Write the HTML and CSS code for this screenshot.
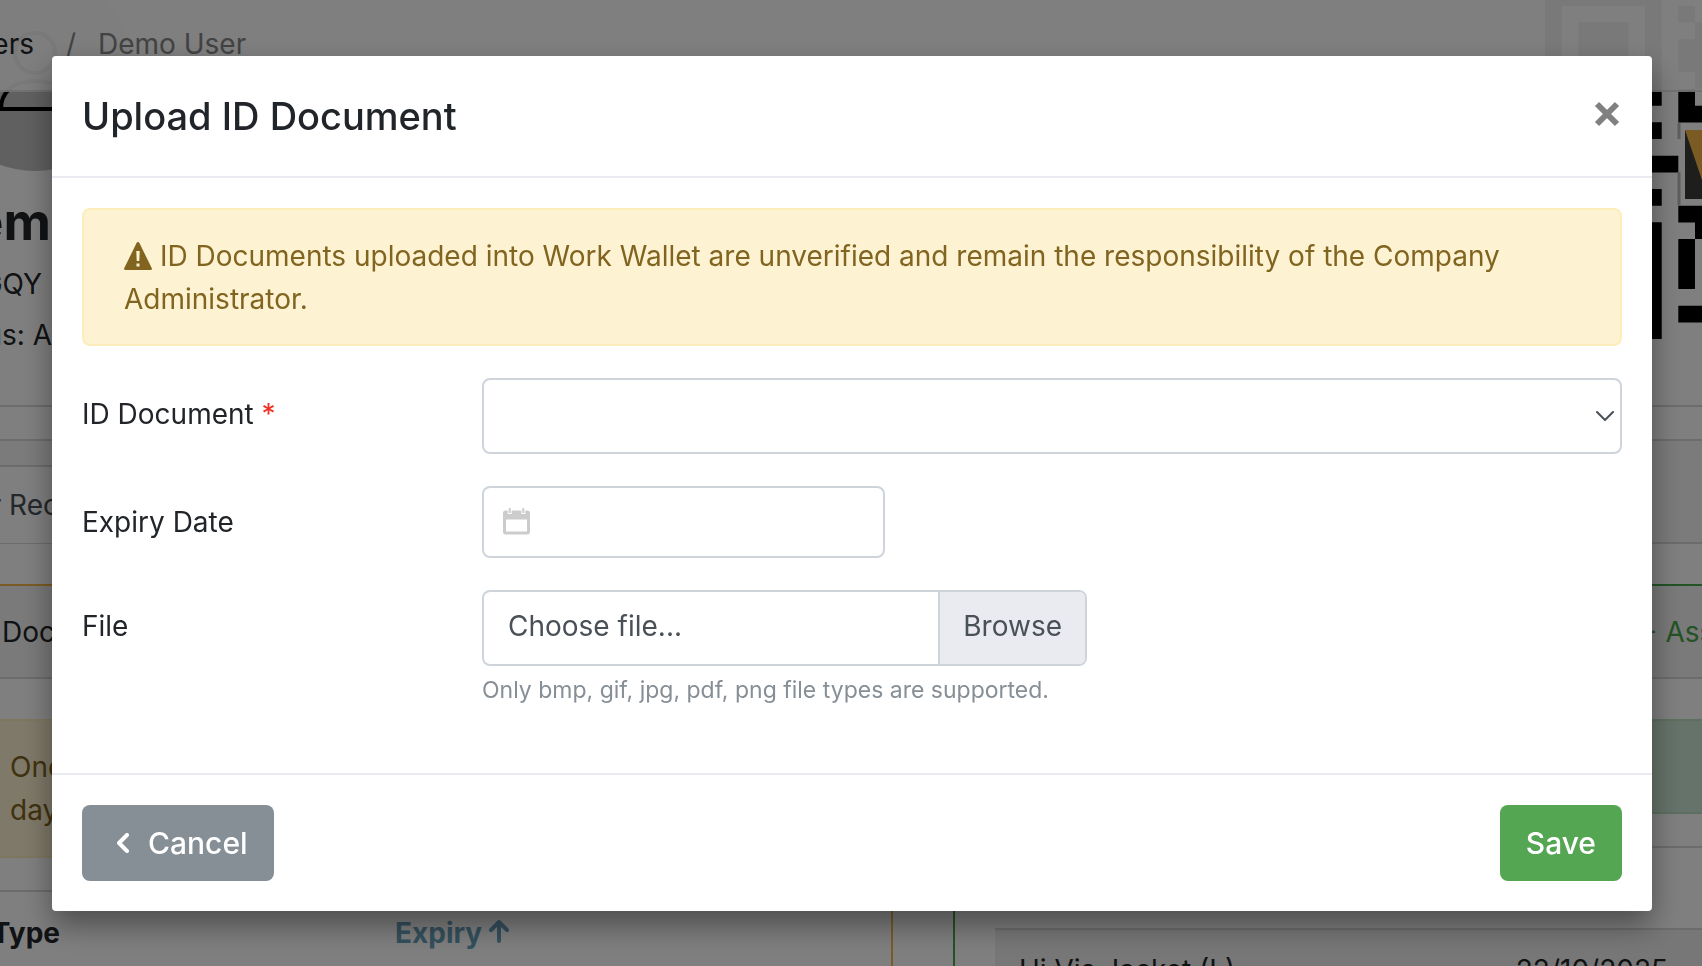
FILE: index.html
```html
<!DOCTYPE html>
<html lang="en">
<head>
    <meta charset="UTF-8">
    <meta name="viewport" content="width=device-width, initial-scale=1.0">
    <title>Upload ID Document</title>
    <link rel="stylesheet" href="styles.css">
</head>
<body>
    <div class="page">
        <nav class="topbar">
            <a class="crumb" href="#">ers</a>
            <span class="slash">/</span>
            <span class="crumb-current">Demo User</span>
        </nav>

        <section class="profile">
            <div class="profile-left">
                <svg class="avatar" width="136" height="172" viewBox="0 0 136 172">
                    <circle cx="35" cy="71" r="100" fill="#c1c1c1"/>
                    <g fill="none" stroke="#000" stroke-width="4">
                        <circle cx="35" cy="53" r="20"/>
                        <path d="M1 109 C1 93 12 81 35 81 S69 93 69 109 Z"/>
                    </g>
                </svg>
                <h2 class="clip-name">em</h2>
                <p class="clip-code">GQY</p>
                <p class="clip-status">us: A</p>
            </div>
            <svg class="qr" width="157" height="340" viewBox="0 11 157 340">
                <path d="M0 0h116.7v116.7H0z"/>
                <path fill="#fff" d="M16.7 16.7h83.3v83.3H16.7z"/>
                <path d="M33.3 33.3h50v50h-50z"/>
                <path d="M100 133.3h16.7V150H100zM100 166.7h33.3v16.7H100zM100 200h16.7v16.7H100zM100 233.3h16.7V350H100z"/>
                <path d="M133.3 16.7H150v16.7h-16.7zM150 33.3h7V50h-7zM133.3 50H157v33.3h-23.7zM150 83.3h7V100h-7zM133.3 100H150v16.7h-16.7zM133.3 116.7H157v16.7h-23.7z"/>
                <path d="M133.3 216.7H157v16.7h-23.7zM150 233.3h7V250h-7zM133.3 250H150v50h-16.7zM133.3 316.7H157v16.7h-23.7z"/>
                <path fill="#bbb" d="M132.5 134h3v16h-3zM132.5 183.300h3v33h-3z"/>
                <path fill="#3d3d39" d="M140 141h17v69h-17z"/>
                <path fill="#f5b749" d="M140 141h17v50z"/>
            </svg>
        </section>

        <div class="tabs">
            <a class="tab" href="#"><span>r Rec</span></a>
        </div>

        <div class="cards">
            <section class="card card-gold">
                <div class="card-header"><span class="card-title">Doc</span></div>
                <div class="card-alert alert-gold">One<br>day</div>
                <table class="doc-table">
                    <thead>
                        <tr>
                            <th class="col-type"><div>Type</div></th>
                            <th class="col-expiry">Expiry
                                <svg width="20" height="24" viewBox="0 0 20 24" fill="none" stroke="currentColor" stroke-width="4" stroke-linecap="round" stroke-linejoin="round"><path d="M10 22V3M2 11l8-8 8 8"/></svg>
                            </th>
                        </tr>
                    </thead>
                </table>
            </section>
            <section class="card card-green">
                <div class="card-header"><a class="assign" href="#">+ Ass</a></div>
                <div class="card-alert alert-green"></div>
                <div class="issue-list">
                    <div class="issue-row">
                        <span>Hi Vis Jacket (L)</span>
                        <span>22/10/2025</span>
                    </div>
                </div>
            </section>
        </div>
    </div>

    <div class="backdrop">
        <form class="modal" role="dialog" aria-labelledby="modal-title">
            <div class="modal-header">
                <h1 id="modal-title">Upload ID Document</h1>
                <button class="close" type="button" aria-label="Close">
                    <svg width="26" height="26" viewBox="0 0 26 26"><path d="M3 3l20 20M23 3L3 23" stroke="#808080" stroke-width="6"/></svg>
                </button>
            </div>

            <div class="modal-body">
                <div class="warning">
                    <svg width="28" height="28" viewBox="0 0 28 28"><path fill="#816420" fill-rule="evenodd" d="M14 0c.6 0 1 .3 1.300.8l12.400 25.200c.5 1-.1 2-1.200 2h-25c-1.100 0-1.700-1-1.200-2L12.700.8c.3-.5.700-.8 1.300-.8zM12.300 9l.4 10h2.600l.4-10zM12.500 21.500v3h3v-3z"/></svg>
                    ID Documents uploaded into Work Wallet are unverified and remain the responsibility of the Company Administrator.
                </div>

                <div class="form-row">
                    <label for="id-document">ID Document <span class="required">*</span></label>
                    <div class="select-box">
                        <select id="id-document">
                            <option value=""></option>
                        </select>
                        <svg width="18" height="11" viewBox="0 0 18 11" fill="none" stroke="#495057" stroke-width="2" stroke-linecap="round" stroke-linejoin="round"><path d="M1 1l8 8 8-8"/></svg>
                    </div>
                </div>

                <div class="form-row">
                    <label for="expiry-date">Expiry Date</label>
                    <div class="date-box">
                        <svg width="27" height="28" viewBox="0 0 27 28"><path fill="#ccc" fill-rule="evenodd" d="M2.500 2.500H4.700V6h4V2.500h9.600V6h4V2.500h2.200C26 2.500 27 3.500 27 5v19c0 1.500-1 2.500-2.500 2.500h-22C1 26.500 0 25.500 0 24V5C0 3.500 1 2.500 2.500 2.500zM3 11.500v12h21v-12z"/><path fill="#ccc" d="M5.700 0h2v5h-2zM19.300 0h2v5h-2z"/></svg>
                        <input id="expiry-date" type="text">
                    </div>
                </div>

                <div class="form-row">
                    <label for="file">File</label>
                    <div>
                        <label class="file-box" for="file">
                            <span class="file-name">Choose file...</span>
                            <span class="file-browse">Browse</span>
                        </label>
                        <input class="file-input" id="file" type="file" accept=".bmp,.gif,.jpg,.pdf,.png">
                        <p class="help">Only bmp, gif, jpg, pdf, png file types are supported.</p>
                    </div>
                </div>
            </div>

            <div class="modal-footer">
                <button class="btn btn-cancel" type="button">
                    <svg width="12" height="20" viewBox="0 0 12 20" fill="none" stroke="#fff" stroke-width="4" stroke-linecap="round" stroke-linejoin="round"><path d="M10 2L2 10l8 8"/></svg>
                    Cancel
                </button>
                <button class="btn btn-save" type="submit">Save</button>
            </div>
        </form>
    </div>
</body>
</html>
```

FILE: styles.css
```css
* {
    box-sizing: border-box;
}
body {
    margin: 0;
    height: 100vh;
    overflow: hidden;
    background-color: #fff;
    color: #212529;
    font-family: Inter, "Liberation Sans", sans-serif;
    font-size: 28px;
    line-height: 43px;
}
h1, h2, p {
    margin: 0;
}
a {
    color: inherit;
    text-decoration: none;
}
button, input, select {
    font: inherit;
}

/* Page behind the dialog */
.page {
    position: relative;
    height: 100vh;
    overflow: hidden;
    white-space: nowrap;
}
.topbar {
    position: absolute;
    top: 0;
    left: 0;
    right: 0;
    height: 92px;
    padding-top: 23px;
    display: flex;
    background-color: rgba(255, 255, 255, 0.95);
    border-bottom: 2px solid rgba(0, 0, 0, 0.1);
}
.crumb {
    width: 34px;
    display: flex;
    justify-content: flex-end;
}
.slash {
    width: 64px;
    text-align: center;
    padding-left: 10px;
    color: #868686;
}
.crumb-current {
    color: #868686;
}
.profile {
    display: flex;
    justify-content: space-between;
    align-items: flex-start;
    height: 407px;
    border-bottom: 2px solid #d8d8d8;
}
.avatar, .qr {
    display: block;
}
.profile-left h2, .profile-left p {
    display: flex;
    justify-content: flex-end;
}
.clip-name {
    width: 51px;
    margin-top: 16px;
    font-size: 52px;
    line-height: 68px;
}
.clip-code {
    width: 42px;
    margin-top: 7px;
}
.clip-status {
    width: 52px;
    margin-top: 8px;
}
.tabs {
    margin-top: 32px;
    height: 105px;
    padding-top: 24px;
    background-color: #f7f7f7;
    border-top: 2px solid #d8d8d8;
    border-bottom: 2px solid #d8d8d8;
}
.tab {
    display: flex;
    align-items: center;
    width: 400px;
    height: 78px;
    background-color: #fff;
    border-top: 2px solid #d8d8d8;
    color: #495057;
}
.tab span {
    display: flex;
    justify-content: flex-end;
    width: 59px;
}
.cards {
    display: grid;
    grid-template-columns: 893fr 749fr;
    column-gap: 60px;
    margin-top: 40px;
    height: 500px;
}
.card-gold {
    border: 2px solid #f5b749;
    border-left: 0;
}
.card-green {
    border: 2px solid #48a64c;
    border-right: 0;
}
.card-header {
    display: flex;
    height: 93px;
    align-items: center;
    padding-top: 2px;
    background-color: #f4f4f4;
    border-bottom: 2px solid #d8d8d8;
}
.card-title {
    padding-left: 2px;
}
.assign {
    width: 63px;
    margin-left: auto;
    color: #48a64c;
}
.card-alert {
    margin-top: 40px;
    border: 2px solid #fceebf;
    border-left: 0;
    border-right: 0;
}
.alert-gold {
    padding: 25px 0 24px 10px;
    background-color: #fdf2d1;
    color: #816420;
}
.alert-green {
    height: 95px;
    margin-left: 40px;
    background-color: #cce7d4;
    border-color: #bbdfc0;
}
.doc-table {
    width: 100%;
    margin-top: 32px;
    border-collapse: collapse;
    border-top: 2px solid #d8d8d8;
    border-bottom: 2px solid #d8d8d8;
}
.doc-table th {
    height: 75px;
    padding: 20px 0 12px;
    text-align: left;
}
.col-type {
    width: 395px;
}
.col-type div {
    display: flex;
    justify-content: flex-end;
    width: 60px;
}
.col-expiry {
    color: #68a0bc;
}
.issue-list {
    margin: 32px 0 0 40px;
    padding-top: 80px;
    border-top: 2px solid #d8d8d8;
}
.issue-row {
    display: flex;
    justify-content: space-between;
    padding: 19px 34px 20px 24px;
    background-color: #efefef;
    border-top: 2px solid #d8d8d8;
}

/* Dialog */
.backdrop {
    position: fixed;
    inset: 0;
    padding: 56px 50px 0 52px;
    background-color: rgba(0, 0, 0, 0.5);
}
.modal {
    background-color: #fff;
    border-radius: 4px;
    box-shadow: 0 14px 30px rgba(0, 0, 0, 0.4);
}
.modal-header, .modal-footer {
    display: flex;
    align-items: center;
    justify-content: space-between;
    padding: 30px;
}
.modal-header {
    border-bottom: 2px solid #e9ebf0;
}
.modal-header h1 {
    font-size: 38px;
    line-height: 60px;
    font-weight: 500;
}
.close {
    display: flex;
    padding: 0 2px 4px;
    border: 0;
    background: none;
}
.modal-body {
    display: grid;
    gap: 32px;
    padding: 30px 30px 64px;
}
.warning {
    padding: 25px 40px 23px;
    background-color: #fdf2d1;
    border: 2px solid #fdedbb;
    border-radius: 8px;
    color: #816420;
}
.warning svg {
    vertical-align: -4px;
}
.form-row {
    display: grid;
    grid-template-columns: 400px 1fr;
}
.form-row > label {
    padding-top: 15px;
}
.required {
    color: #f03020;
}
.select-box {
    position: relative;
}
.select-box select, .date-box, .file-box {
    background-color: #fff;
    border: 2px solid #ced4da;
    border-radius: 8px;
}
.select-box select {
    display: block;
    width: 100%;
    height: 76px;
    appearance: none;
}
.select-box svg {
    position: absolute;
    top: 33px;
    right: 8px;
    pointer-events: none;
}
.date-box {
    display: flex;
    align-items: center;
    gap: 16px;
    width: 403px;
    height: 72px;
    padding: 0 19px;
}
.date-box input {
    flex: 1;
    min-width: 0;
    border: 0;
    outline: 0;
}
.file-box {
    display: flex;
    width: 605px;
    height: 76px;
    overflow: hidden;
    color: #495057;
}
.file-name {
    flex: 1;
    padding: 13px 24px;
}
.file-browse {
    padding: 13px 23px;
    background-color: #e9ebf0;
    border-left: 2px solid #ced4da;
}
.file-input {
    position: absolute;
    width: 1px;
    height: 1px;
    opacity: 0;
}
.help {
    padding: 6px 0 1px;
    color: #868e96;
    font-size: 23px;
    line-height: 36px;
}
.modal-footer {
    border-top: 2px solid #e9ebf0;
}
.btn {
    display: flex;
    align-items: center;
    height: 76px;
    padding: 0 26px;
    border: 0;
    border-radius: 8px;
    color: #fff;
    font-size: 30px;
    font-weight: 500;
    line-height: 48px;
}
.btn-cancel {
    gap: 19px;
    padding-left: 35px;
    background-color: #868e96;
}
.btn-save {
    background-color: #54a653;
}
```
